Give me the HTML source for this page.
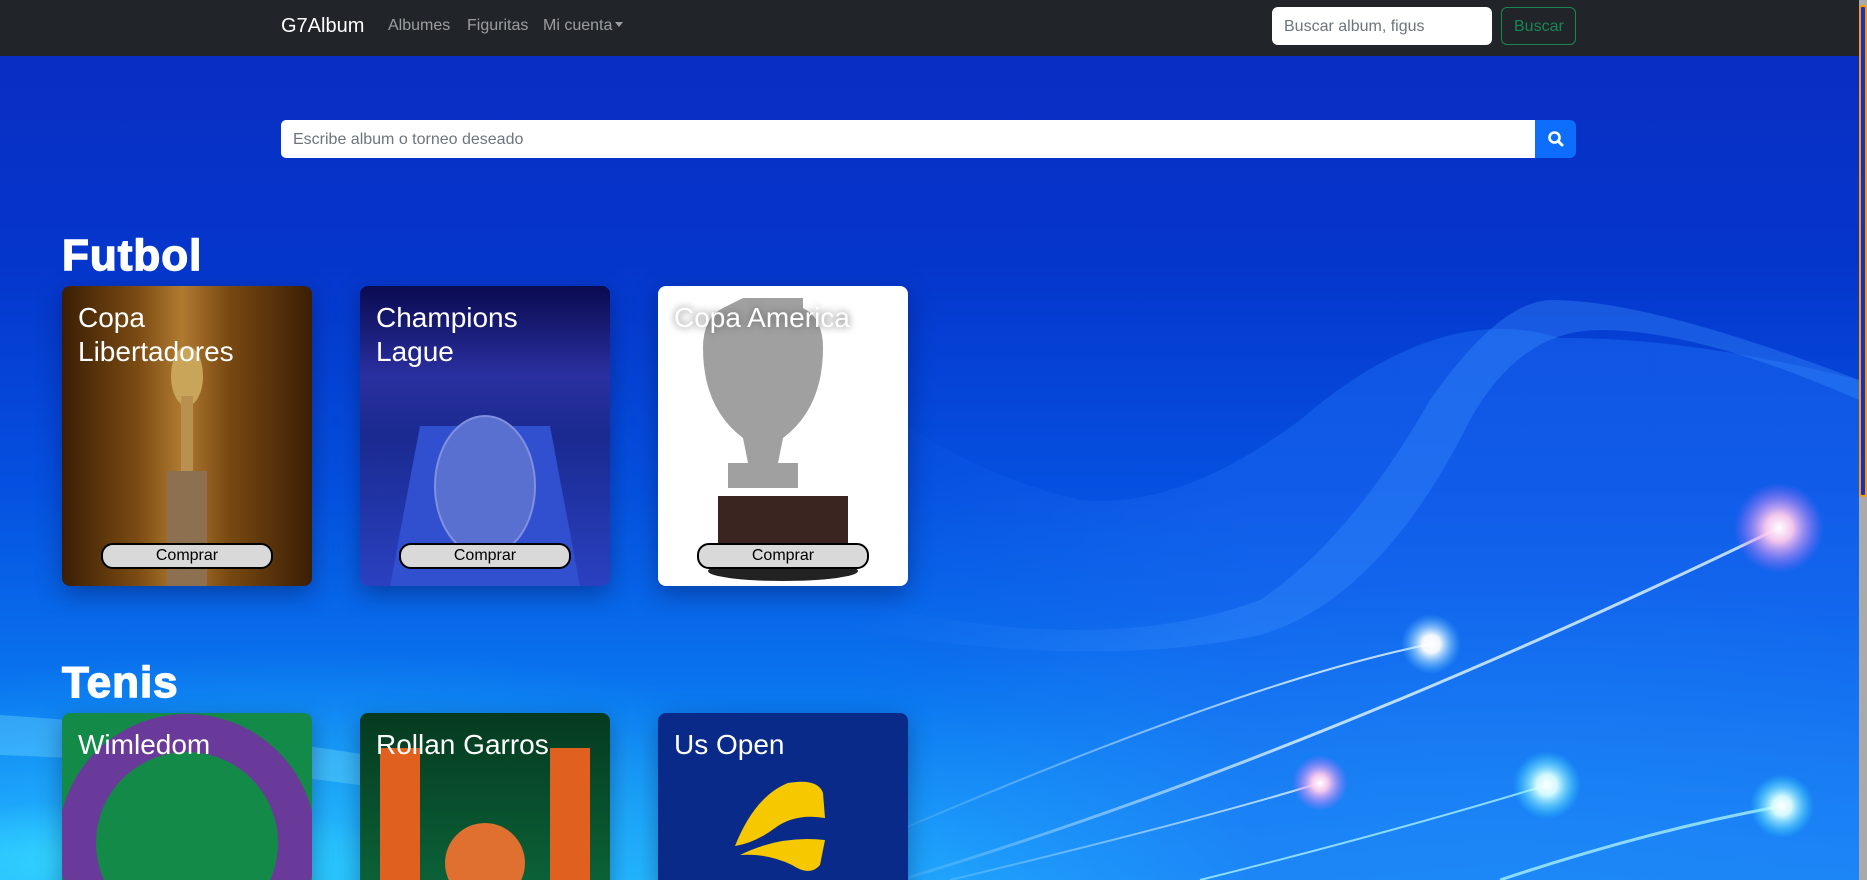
<!DOCTYPE html>
<html><head><meta charset="utf-8"><style>
*{box-sizing:border-box;margin:0;padding:0}
html,body{width:1867px;height:880px;overflow:hidden;font-family:"Liberation Sans",Arial,sans-serif}
body{position:relative;background:
radial-gradient(ellipse 300px 60px at 120px 860px,rgba(60,230,255,.7),transparent),
radial-gradient(ellipse 700px 250px at 300px 900px,rgba(40,200,255,.8),transparent),
radial-gradient(ellipse 800px 300px at 1500px 880px,rgba(30,180,255,.7),transparent),
linear-gradient(180deg,#0a2cc0 0%,#0536cc 30%,#0550e0 55%,#0a78f0 80%,#20a8ff 100%)}
.wrap{position:absolute;left:0;top:0;width:1867px;height:880px;overflow:hidden}
.nav{position:absolute;left:0;top:0;width:1859px;height:56px;background:#212529}
.brand{position:absolute;left:281px;top:15px;color:#fff;font-size:20px}
.nl{position:absolute;top:17px;color:rgba(255,255,255,.55);font-size:16px}
.caret{display:inline-block;border-top:5px solid rgba(255,255,255,.55);border-left:4px solid transparent;border-right:4px solid transparent;vertical-align:3px;margin-left:3px}
.ns{position:absolute;left:1272px;top:7px;width:220px;height:38px;background:#fff;border-radius:6px;color:#6c757d;font-size:16px;padding:11px 12px}
.nb{position:absolute;left:1501px;top:7px;width:75px;height:38px;border:1px solid #198754;border-radius:6px;color:#198754;font-size:16px;padding:10px 12px}
.bs{position:absolute;left:281px;top:120px;width:1255px;height:38px;background:#fff;border-radius:5px 0 0 5px;color:#6c757d;font-size:16px;padding:11px 12px}
.bb{position:absolute;left:1535px;top:120px;width:41px;height:38px;background:#0d6efd;border-radius:0 6px 6px 0}
h2{position:absolute;left:62px;color:#fff;font-size:44px;font-weight:bold;font-family:"Liberation Sans",Arial,sans-serif;-webkit-text-stroke:1.4px #fff;letter-spacing:1px}
.card{position:absolute;width:250px;height:300px;border-radius:8px;overflow:hidden;box-shadow:0 8px 25px rgba(0,0,40,.35)}
.t{position:absolute;left:16px;top:15px;color:#fff;font-size:28px;line-height:34px;width:220px}
.btn{position:absolute;left:39px;top:257px;width:172px;height:26px;background:#d9d9d9;border:2px solid #000;border-radius:12px;text-align:center;font-size:16px;line-height:22px;color:#000}
.sb{position:absolute;left:1859px;top:0;width:8px;height:880px;background:#aaa}
.th{position:absolute;left:1859px;top:5px;width:8px;height:492px;background:#1030d0;border:2px solid #f90;border-radius:3px}
</style></head><body><div class="wrap">
<svg style="position:absolute;left:0;top:0" width="1867" height="880">
<defs><radialGradient id="g"><stop offset="0" stop-color="#fff"/><stop offset=".3" stop-color="#fff" stop-opacity=".95"/><stop offset="1" stop-color="#6cf" stop-opacity="0"/></radialGradient>
<radialGradient id="c"><stop offset="0" stop-color="#fff"/><stop offset=".3" stop-color="#dff" stop-opacity=".95"/><stop offset="1" stop-color="#3ef" stop-opacity="0"/></radialGradient>
<radialGradient id="p"><stop offset="0" stop-color="#fff"/><stop offset=".3" stop-color="#fce" stop-opacity=".95"/><stop offset="1" stop-color="#c6f" stop-opacity="0"/></radialGradient>
<linearGradient id="fw" x1="850" y1="0" x2="1250" y2="0" gradientUnits="userSpaceOnUse"><stop offset="0" stop-color="#1a66f0" stop-opacity="0"/><stop offset="1" stop-color="#1a66f0" stop-opacity=".55"/></linearGradient>
<linearGradient id="fb" x1="850" y1="0" x2="1250" y2="0" gradientUnits="userSpaceOnUse"><stop offset="0" stop-color="#3a90ff" stop-opacity="0"/><stop offset="1" stop-color="#3a90ff" stop-opacity=".35"/></linearGradient>
<linearGradient id="ls" x1="850" y1="0" x2="1300" y2="0" gradientUnits="userSpaceOnUse"><stop offset="0" stop-color="#d8f0ff" stop-opacity="0"/><stop offset="1" stop-color="#d8f0ff" stop-opacity=".85"/></linearGradient></defs>
<path d="M850 380 Q950 470 1080 500 Q1180 510 1300 420 Q1440 300 1560 338 Q1690 337 1859 380 L1859 880 L850 880Z" fill="url(#fw)"/>
<path d="M850 600 Q1100 660 1260 600 Q1350 540 1430 400 Q1500 300 1552 300 Q1650 300 1859 380 L1859 400 Q1700 330 1600 330 Q1520 330 1470 420 Q1380 600 1260 635 Q1100 670 850 630Z" fill="url(#fb)"/>
<path d="M900 880 Q1300 760 1779 528" stroke="url(#ls)" stroke-width="3" fill="none"/>
<path d="M900 830 Q1250 680 1431 644" stroke="url(#ls)" stroke-width="2" fill="none"/>
<path d="M950 880 Q1200 820 1320 783" stroke="url(#ls)" stroke-width="2" fill="none"/>
<path d="M1200 880 Q1400 830 1547 785" stroke="#bff" stroke-width="2" fill="none" opacity=".7"/>
<path d="M1500 880 Q1650 830 1782 806" stroke="#bff" stroke-width="3" fill="none" opacity=".7"/>
<path d="M0 715 Q300 735 560 790 L560 820 Q300 765 0 755Z" fill="#8ef" opacity=".3"/>
<circle cx="1779" cy="528" r="45" fill="url(#p)"/><circle cx="1431" cy="644" r="30" fill="url(#g)"/>
<circle cx="1320" cy="783" r="28" fill="url(#p)"/><circle cx="1547" cy="785" r="34" fill="url(#c)"/><circle cx="1782" cy="806" r="32" fill="url(#c)"/>
</svg>
<div class="nav">
<div class="brand">G7Album</div>
<div class="nl" style="left:388px">Albumes</div>
<div class="nl" style="left:467px">Figuritas</div>
<div class="nl" style="left:543px">Mi cuenta<span class="caret"></span></div>
<div class="ns">Buscar album, figus</div>
<div class="nb">Buscar</div>
</div>
<div class="bs">Escribe album o torneo deseado</div>
<div class="bb"><svg width="41" height="38" viewBox="0 0 41 38"><circle cx="19.5" cy="17.5" r="5" fill="none" stroke="#fff" stroke-width="2.6"/><path d="M23 21l4 4" stroke="#fff" stroke-width="3" stroke-linecap="round"/></svg></div>

<h2 style="top:231px">Futbol</h2>
<div class="card" style="left:62px;top:286px;background:linear-gradient(90deg,#3a1e05,#7a4a12 30%,#b07a30 48%,#7a4a12 66%,#3a1e05)">
<svg style="position:absolute;left:0;top:0" width="250" height="300"><ellipse cx="125" cy="90" rx="16" ry="30" fill="#c9a55a"/><rect x="119" y="110" width="12" height="80" fill="#b89050"/><rect x="105" y="185" width="40" height="115" fill="#8c7050"/></svg>
<div class="t">Copa<br>Libertadores</div><div class="btn">Comprar</div></div>
<div class="card" style="left:360px;top:286px;background:linear-gradient(180deg,#0a0a50,#2a30a0 30%,#1a2a90 50%,#2a40c0 100%)">
<svg style="position:absolute;left:0;top:0" width="250" height="300"><path d="M60 140h130l30 160H30z" fill="#3050d0"/><ellipse cx="125" cy="200" rx="50" ry="70" fill="#5a70d0" stroke="#8090e0" stroke-width="2"/></svg>
<div class="t">Champions<br>Lague</div><div class="btn">Comprar</div></div>
<div class="card" style="left:658px;top:286px;background:#fff">
<svg style="position:absolute;left:0;top:0" width="250" height="300"><path d="M65 12h60v10q20 10 20 40 0 60-40 90l-5 25h20v25h-70v-25h20l-5-25q-40-30-40-90 0-30 20-40z" transform="translate(20,0)" fill="#a0a0a0"/><rect x="60" y="210" width="130" height="50" fill="#3a2520"/><ellipse cx="125" cy="285" rx="75" ry="10" fill="#222"/></svg>
<div class="t" style="text-shadow:0 0 8px #666">Copa America</div><div class="btn">Comprar</div></div>

<h2 style="top:658px">Tenis</h2>
<div class="card" style="left:62px;top:713px;background:#138a48">
<svg style="position:absolute;left:0;top:0" width="250" height="200"><circle cx="125" cy="130" r="110" fill="none" stroke="#6a3a9a" stroke-width="38"/></svg>
<div class="t">Wimledom</div></div>
<div class="card" style="left:360px;top:713px;background:linear-gradient(180deg,#053a20,#10804a)">
<svg style="position:absolute;left:0;top:0" width="250" height="200"><rect x="20" y="35" width="40" height="150" fill="#e06020"/><rect x="190" y="35" width="40" height="150" fill="#e06020"/><circle cx="125" cy="150" r="40" fill="#e07030"/></svg>
<div class="t">Rollan Garros</div></div>
<div class="card" style="left:658px;top:713px;background:#0a2a8a">
<svg style="position:absolute;left:0;top:0" width="250" height="200"><path d="M130 70q30-5 35 10l2 25q-30-5-50 10-20 15-40 18 20-50 53-63zM82 142q40-20 85-15l-5 25q-10 12-28 0-25-12-52-10z" fill="#f5c800"/></svg>
<div class="t">Us Open</div></div>

<div class="sb"></div><div class="th"></div>
</div></body></html>
